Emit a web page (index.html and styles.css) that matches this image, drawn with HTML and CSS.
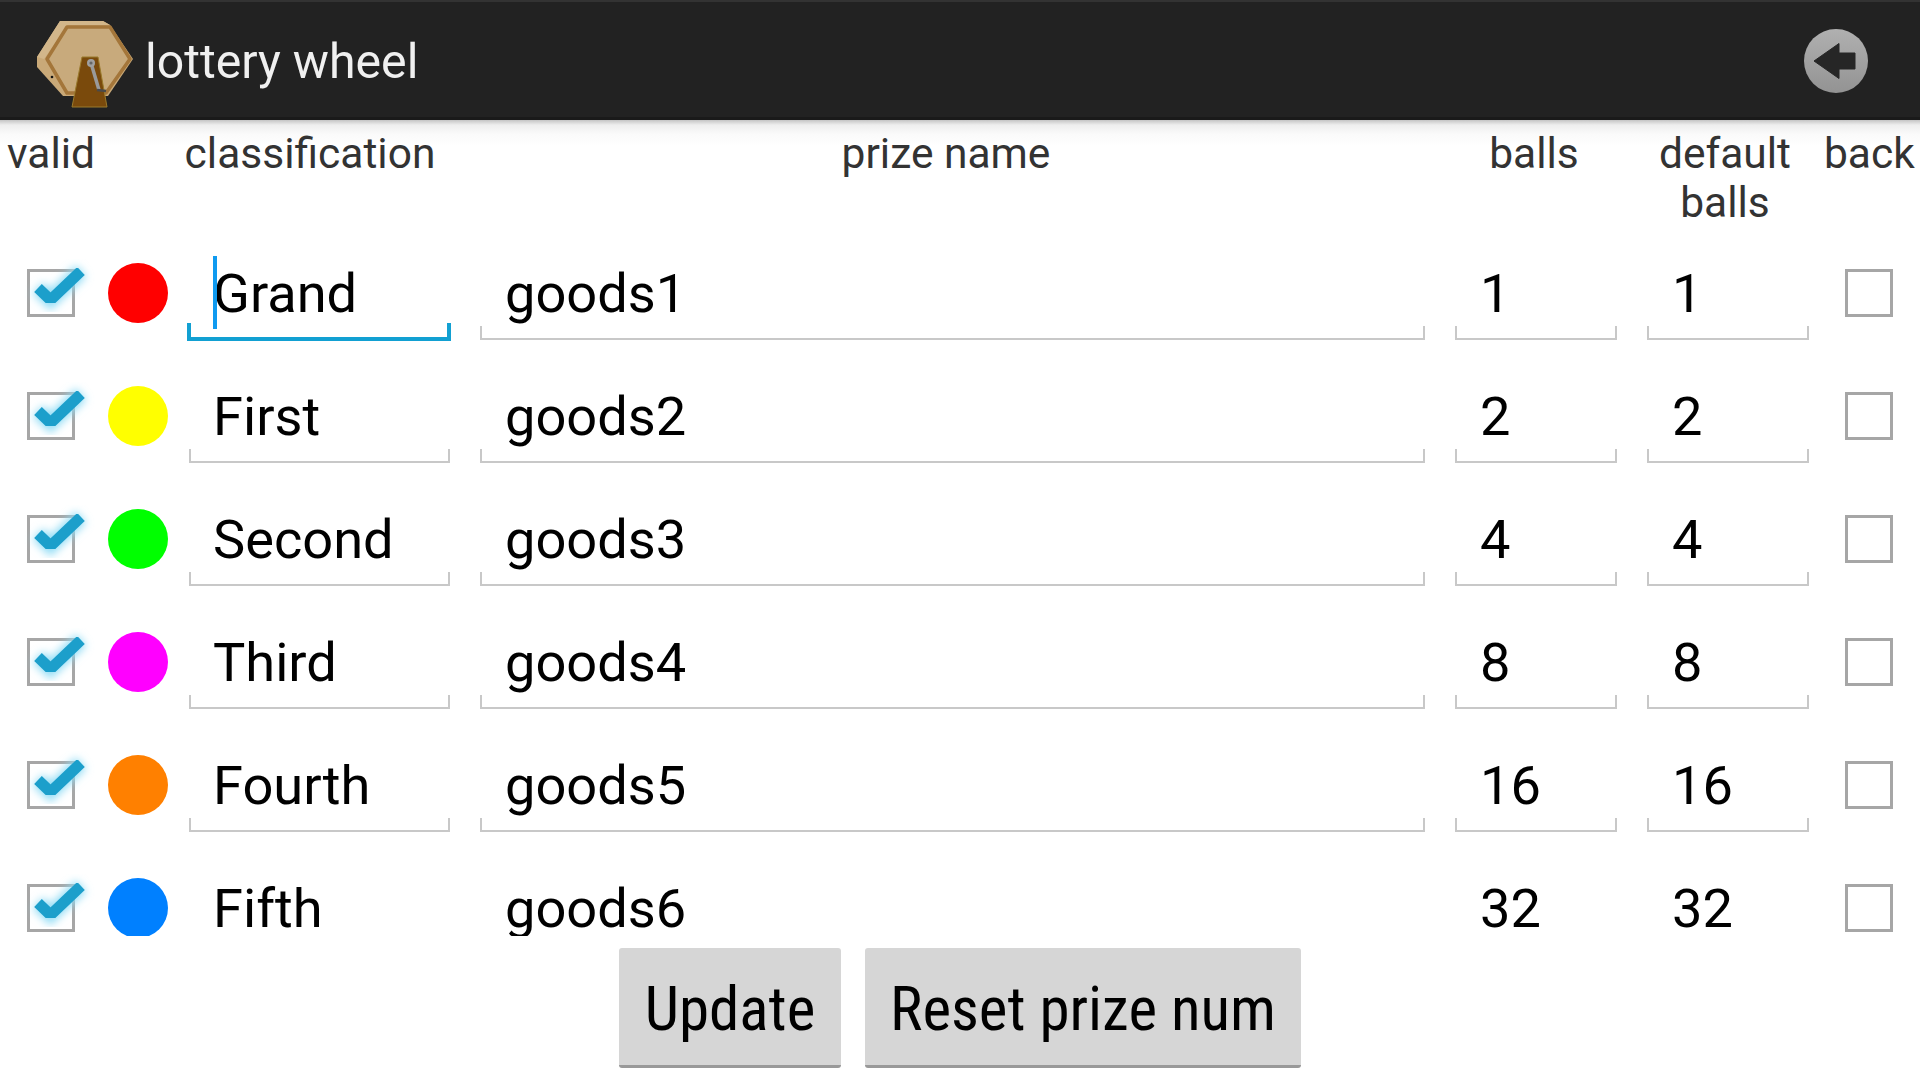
FILE: index.html
```html
<!DOCTYPE html>
<html lang="en">
<head>
<meta charset="utf-8">
<title>lottery wheel</title>
<link rel="stylesheet" href="styles.css">
</head>
<body>
<svg class="defs" aria-hidden="true">
  <defs>
    <filter id="soft" x="-10%" y="-10%" width="120%" height="120%"><feGaussianBlur stdDeviation="0.7"/></filter>
    <filter id="glow" x="-40%" y="-40%" width="180%" height="180%"><feGaussianBlur stdDeviation="4"/></filter>
    <symbol id="checked" viewBox="20 255 75 70">
      <rect x="28.5" y="270.500" width="45" height="45" fill="none" stroke="#a6a6a6" stroke-width="3" filter="url(#soft)"/>
      <path d="M38 288 L50.500 300 L81 271" fill="none" stroke="#8fdcf5" stroke-width="15" filter="url(#glow)"/>
      <path d="M38 288 L50.500 300 L81 271" fill="none" stroke="#1c9fcb" stroke-width="11" filter="url(#soft)"/>
    </symbol>
    <symbol id="unchecked" viewBox="0 0 48 48">
      <rect x="1.500" y="1.500" width="45" height="45" fill="none" stroke="#a6a6a6" stroke-width="3" filter="url(#soft)"/>
    </symbol>
  </defs>
</svg>

<div class="app">
  <header class="appbar">
    <svg class="logo" viewBox="30 15 110 95" aria-hidden="true">
      <path d="M60 21 L103 21 L110 25 L133 59 L108 96 L63 96 L37 67 L37 57 Z" fill="#c9a978"/>
      <path d="M60 21 L103 21 L110 25 L68 25 L44 59 L37 57 Z" fill="#d2b68a"/>
      <path d="M67 27 L110 27 L130 59 L106 93 L67 93 L47 59 Z" fill="#c8aa7c" stroke="#a4763a" stroke-width="3.500" stroke-linejoin="round"/>
      <circle cy="77" cx="52" r="1.300" fill="#111"/>
      <path d="M82 57 L98 57 L107 107 L72 107 Z" fill="#7a4a0c" stroke="#9a7a2c" stroke-width="1"/>
      <path d="M91 63 L99 90" stroke="#9a9a9a" stroke-width="3.500" fill="none"/>
      <path d="M97 90 L106 91" stroke="#4a4a4a" stroke-width="2.500" fill="none"/>
      <circle cx="91" cy="63" r="4" fill="#a0a0a0"/>
      <circle cx="91" cy="63" r="1.600" fill="#666"/>
    </svg>
    <h1 class="title">lottery wheel</h1>
    <svg class="back" viewBox="0 0 66 66" aria-hidden="true">
      <defs>
        <linearGradient id="backfill" x1="0" y1="0" x2="0" y2="1">
          <stop offset="0" stop-color="#b0b0b0"/>
          <stop offset="1" stop-color="#939393"/>
        </linearGradient>
      </defs>
      <circle cx="33" cy="33" r="32" fill="url(#backfill)"/>
      <path d="M11 33 L36 15.500 L36 25 L52 25 L52 41 L36 41 L36 50.500 Z" fill="#262626" stroke="#262626" stroke-width="1" stroke-linejoin="round"/>
    </svg>
  </header>

  <div class="heads">
    <div class="head head-valid">valid</div>
    <div class="head head-class">classification</div>
    <div class="head head-prize">prize name</div>
    <div class="head head-balls">balls</div>
    <div class="head head-default">default<br>balls</div>
    <div class="head head-back">back</div>
  </div>

  <div class="list">
    <div class="row">
      <svg class="check"><use href="#checked"/></svg>
      <span class="dot dot-red"></span>
      <div class="field field-focus">Grand<span class="caret"></span></div>
      <div class="field">goods1</div>
      <div class="field">1</div>
      <div class="field">1</div>
      <svg class="box"><use href="#unchecked"/></svg>
    </div>
    <div class="row">
      <svg class="check"><use href="#checked"/></svg>
      <span class="dot dot-yellow"></span>
      <div class="field">First</div>
      <div class="field">goods2</div>
      <div class="field">2</div>
      <div class="field">2</div>
      <svg class="box"><use href="#unchecked"/></svg>
    </div>
    <div class="row">
      <svg class="check"><use href="#checked"/></svg>
      <span class="dot dot-green"></span>
      <div class="field">Second</div>
      <div class="field">goods3</div>
      <div class="field">4</div>
      <div class="field">4</div>
      <svg class="box"><use href="#unchecked"/></svg>
    </div>
    <div class="row">
      <svg class="check"><use href="#checked"/></svg>
      <span class="dot dot-magenta"></span>
      <div class="field">Third</div>
      <div class="field">goods4</div>
      <div class="field">8</div>
      <div class="field">8</div>
      <svg class="box"><use href="#unchecked"/></svg>
    </div>
    <div class="row">
      <svg class="check"><use href="#checked"/></svg>
      <span class="dot dot-orange"></span>
      <div class="field">Fourth</div>
      <div class="field">goods5</div>
      <div class="field">16</div>
      <div class="field">16</div>
      <svg class="box"><use href="#unchecked"/></svg>
    </div>
    <div class="row">
      <svg class="check"><use href="#checked"/></svg>
      <span class="dot dot-blue"></span>
      <div class="field">Fifth</div>
      <div class="field">goods6</div>
      <div class="field">32</div>
      <div class="field">32</div>
      <svg class="box"><use href="#unchecked"/></svg>
    </div>
  </div>

  <footer class="actions">
    <button class="btn btn-update" type="button">Update</button>
    <button class="btn btn-reset" type="button">Reset prize num</button>
  </footer>
</div>
</body>
</html>
```

FILE: styles.css
```css
* { box-sizing: border-box; }
html, body { margin: 0; padding: 0; }
body {
  width: 1920px;
  height: 1080px;
  overflow: hidden;
  background: #fff;
  font-family: Roboto, "Liberation Sans", sans-serif;
  color: #000;
}
.defs { position: absolute; width: 0; height: 0; }
.app { display: flex; flex-direction: column; height: 1080px; }

.appbar {
  flex: none;
  height: 120px;
  display: flex;
  align-items: center;
  padding-left: 30px;
  padding-right: 51px;
  background: #222;
  border-top: 2px solid #333;
  border-bottom: 3px solid #1a1a1a;
}
.logo { width: 110px; height: 95px; flex: none; margin-top: 5px; }
.title {
  margin: 3px 0 0 5px;
  font-size: 48.2px;
  font-weight: 400;
  color: #f0f0f0;
  flex: 1;
}
.back { width: 66px; height: 66px; flex: none; margin-top: 2px; }

.heads {
  flex: none;
  height: 112px;
  display: flex;
  align-items: flex-start;
  padding-top: 9px;
  background: linear-gradient(#c4c4c4 0, #eee 5px, #fafafa 14px, #fff 26px);
}
.head {
  font-size: 42.5px;
  line-height: 49px;
  color: #333;
  text-align: center;
  flex: none;
}
.head-valid { width: 102px; }
.head-class { width: 300px; margin-left: 58px; }
.head-prize { width: 932px; margin-left: 20px; }
.head-balls { width: 140px; margin-left: 52px; }
.head-default { width: 170px; margin-left: 36px; }
.head-back { width: 90px; margin-left: 14px; }

.list { flex: none; height: 704px; overflow: hidden; }
.row {
  height: 123px;
  display: grid;
  grid-template-columns: 81px 80px 292px 975px 192px 198px 48px;
  padding-left: 27px;
}
.check { width: 75px; height: 70px; margin: 23px 0 0 -7px; }
.box { width: 48px; height: 48px; margin-top: 37px; }
.dot { width: 60px; height: 60px; border-radius: 50%; margin-top: 31px; }
.dot-red { background: #f00; }
.dot-yellow { background: #ff0; }
.dot-green { background: #0f0; }
.dot-magenta { background: #f0f; }
.dot-orange { background: #ff8000; }
.dot-blue { background: #0080ff; }

.field {
  position: relative;
  width: 100%;
  height: 108px;
  padding: 22px 0 0 25px;
  font-size: 54.2px;
  line-height: 80px;
  color: #000;
}
.row .field:nth-child(3) { width: 261px; margin-left: 1px; padding-left: 24px; }
.row .field:nth-child(4) { width: 945px; }
.row .field:nth-child(5),
.row .field:nth-child(6) { width: 162px; }
.field::after {
  content: "";
  position: absolute;
  left: 0;
  right: 0;
  bottom: 0;
  height: 12px;
  border: 2px solid #c8c8c8;
  border-top: 0;
}
.field-focus::after { left: -2px; right: -1px; bottom: -1px; height: 14px; border: 4px solid #12a0d2; border-top: 0; }
.caret {
  position: absolute;
  left: 24px;
  top: 24px;
  width: 4px;
  height: 73px;
  background: #0f9af0;
}

.actions {
  flex: 1;
  display: flex;
  align-items: flex-start;
  gap: 24px;
  padding: 12px 0 0 619px;
}
.btn {
  height: 120px;
  border: 0;
  border-bottom: 3px solid #999;
  border-radius: 3px;
  background: #d6d6d6;
  color: #000;
  font-family: inherit;
  font-size: 61px;
  font-stretch: 75%;
  padding: 4px 0 0;
}
.btn-update { width: 222px; }
.btn-reset { width: 436px; }
```
